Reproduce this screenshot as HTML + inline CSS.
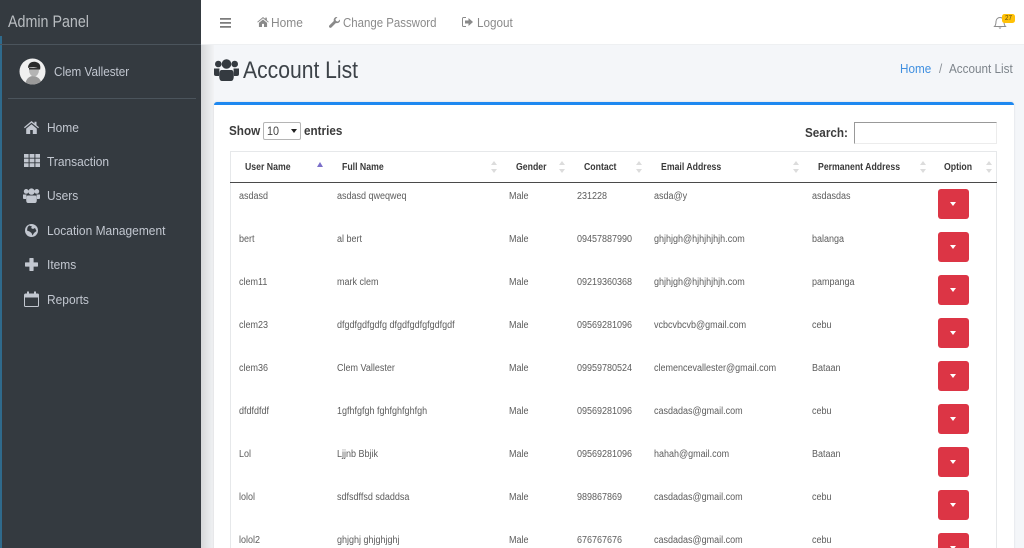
<!DOCTYPE html>
<html lang="en"><head><meta charset="utf-8"><title>Account List</title>
<style>
html,body{margin:0;padding:0;width:1024px;height:548px;overflow:hidden}
body{background:#f4f6f9;font-family:"Liberation Sans",sans-serif}
#w{position:absolute;left:0;top:0;width:1024px;height:548px;overflow:hidden;background:#f4f6f9;filter:blur(.3px)}
#w div,#w span,#w svg{position:absolute}
.t{white-space:nowrap;line-height:14px;height:14px;transform:scaleX(.9);transform-origin:0 50%}
.m{font-size:13.3px;color:#c2c7d0}
.n{font-size:13px;color:#8a8a8a}
.h{font-size:9.7px;font-weight:bold;color:#3a3a3a}
.c{font-size:10px;color:#5c5c5c}
.l{font-size:13px;font-weight:bold;color:#3c3c3c}
.b{width:31px;height:30px;left:938px;background:#dc3545;border-radius:3px}
.b:after{content:"";position:absolute;left:12px;top:13px;border:3.5px solid transparent;border-top:4px solid #fff;border-bottom:0}
.s{width:6px;height:12px;top:161px}
.s:before,.s:after{content:"";position:absolute;left:0;border:3px solid transparent}
.s:before{top:0;border-top:0;border-bottom:4px solid #dcdcdc}
.s:after{bottom:0;border-bottom:0;border-top:4px solid #dcdcdc}
</style></head><body><div id="w">
<!-- sidebar -->
<div style="left:201px;top:0;width:13px;height:548px;background:linear-gradient(90deg,#d6d8da,#f2f3f5)"></div>
<div style="left:0;top:0;width:201px;height:548px;background:#343a40"></div>
<div style="left:0;top:36px;width:2px;height:512px;background:#2f6a8c"></div>
<div style="left:0;top:44px;width:201px;height:1px;background:#4b545c"></div>
<div style="left:8px;top:98px;width:188px;height:1px;background:#4b545c"></div>
<span class="t" style="left:8px;top:13px;height:18px;line-height:18px;font-size:17px;color:#b9bdc1;transform:scaleX(.84)">Admin Panel</span>
<svg style="left:19px;top:58px" width="27" height="27" viewBox="0 0 27 27"><defs><clipPath id="a"><circle cx="13.5" cy="13.5" r="13"/></clipPath></defs><g clip-path="url(#a)"><rect width="27" height="27" fill="#f0f0f0"/><path d="M6 27c1-7 5-9 8-9s8 2 9 9z" fill="#9a9a9a"/><ellipse cx="15" cy="12" rx="5" ry="6.5" fill="#b4b4b4"/><path d="M9 10c0-5 4-7 8-6s5 4 4 8c-2-3-8-4-12-2z" fill="#2b2b2b"/><rect x="10" y="10" width="10" height="1.5" fill="#333"/></g></svg>
<span class="t" style="left:54px;top:65px;font-size:13px;color:#c2c7d0">Clem Vallester</span>

<svg style="left:24px;top:121px" width="15" height="13" viewBox="0 0 15 13"><path d="M7.5 0 0 6.300l.8.900L7.500 1.700l6.700 5.500.8-.9L12.500 4.200V.8h-2v1.700zM2.200 7.600V13h4V9h2.600v4h4V7.600L7.500 3.200z" fill="#c2c7d0"/></svg>
<span class="t m" style="left:47px;top:120.5px">Home</span>
<svg style="left:24px;top:154px" width="16" height="13" viewBox="0 0 16 13"><path d="M0 0h4.600v3.800H0zM5.600 0h4.800v3.800H5.600zM11.400 0H16v3.800h-4.600zM0 4.600h4.600v3.800H0zM5.600 4.600h4.800v3.800H5.600zM11.400 4.600H16v3.800h-4.600zM0 9.200h4.600V13H0zM5.600 9.200h4.800V13H5.600zM11.400 9.200H16V13h-4.600z" fill="#c2c7d0"/></svg>
<span class="t m" style="left:47px;top:154.5px">Transaction</span>
<svg style="left:23px;top:188px" width="17" height="15" viewBox="0 0 17 15"><g fill="#c2c7d0"><circle cx="3.200" cy="3.400" r="2.400"/><circle cx="13.800" cy="3.400" r="2.400"/><circle cx="8.500" cy="3.600" r="3.200"/><path d="M0 6.500h3.600L3 11H1c-1 0-1-1-1-1.500zM17 6.500h-3.600L14 11h2c1 0 1-1 1-1.500zM4.800 7.500h7.400c1.200 0 1.600 1.500 1.600 3.500s0 4-1.800 4H5c-1.800 0-1.800-2-1.800-4s.4-3.500 1.600-3.500z"/></g></svg>
<span class="t m" style="left:47px;top:189px">Users</span>
<svg style="left:25px;top:224px" width="13" height="13" viewBox="0 0 13 13"><circle cx="6.500" cy="6.500" r="6.500" fill="#c2c7d0"/><path d="M4 1.500 7 2.500 6 4 8 5 10 4 11.500 7 9 9 7.500 11.500 6.500 9 4.500 7.500 2 6.500 2.500 3.500z" fill="#343a40"/></svg>
<span class="t m" style="left:47px;top:224px">Location Management</span>
<svg style="left:25px;top:258px" width="13" height="13" viewBox="0 0 13 13"><path d="M5 0h3a.6.6 0 0 1 .6.6V4.400h3.800a.6.6 0 0 1 .6.6v3a.6.6 0 0 1-.6.6H8.600v3.800A.6.6 0 0 1 8 13H5a.6.6 0 0 1-.6-.6V8.600H.6A.6.6 0 0 1 0 8V5a.6.6 0 0 1 .6-.6h3.800V.6A.6.6 0 0 1 5 0z" fill="#c2c7d0"/></svg>
<span class="t m" style="left:47px;top:258px">Items</span>
<svg style="left:24px;top:291px" width="15" height="16" viewBox="0 0 15 16"><path d="M1.500 3h12a1 1 0 0 1 1 1v10.500a1 1 0 0 1-1 1h-12a1 1 0 0 1-1-1V4a1 1 0 0 1 1-1z" fill="none" stroke="#c2c7d0"/><path d="M.5 3.500h14v3H.5zM3 .5h2v3.500H3zM10 .5h2v3.500h-2z" fill="#c2c7d0"/></svg>
<span class="t m" style="left:47px;top:292.5px">Reports</span>

<!-- navbar -->
<div style="left:201px;top:0;width:823px;height:44px;background:#fff;border-bottom:1px solid #eef0f2"></div>
<svg style="left:220px;top:18px" width="11" height="10" viewBox="0 0 11 10"><path d="M0 0h11v1.800H0zM0 4h11v1.800H0zM0 8h11v1.800H0z" fill="#7c7c7c"/></svg>
<svg style="left:257px;top:17px" width="12" height="10" viewBox="0 0 15 13"><path d="M7.500 0 0 6.300l.8.900L7.500 1.700l6.700 5.500.8-.9L12.500 4.200V.8h-2v1.700zM2.200 7.600V13h4V9h2.600v4h4V7.600L7.500 3.200z" fill="#8a8a8a"/></svg>
<span class="t n" style="left:271px;top:15.5px;transform:scaleX(.92)">Home</span>
<svg style="left:329px;top:17px" width="11" height="11" viewBox="0 0 11 11"><path d="M11 2.500 8.800 4.600 7 4 6.400 2.200 8.500 0C6.500-.5 4.200 1.300 4.800 4L.4 8.400c-.6.600-.6 1.400 0 2s1.500.6 2.100 0L6.900 6c2.600.7 4.700-1.300 4.100-3.500z" fill="#8a8a8a"/></svg>
<span class="t n" style="left:343px;top:15.5px;transform:scaleX(.88)">Change Password</span>
<svg style="left:462px;top:17px" width="11" height="10" viewBox="0 0 11 10"><path d="M4 .5H1.500a1 1 0 0 0-1 1v7a1 1 0 0 0 1 1H4" fill="none" stroke="#8a8a8a"/><path d="M6.500 1 11 5 6.500 9V6.500H3v-3h3.500z" fill="#8a8a8a"/></svg>
<span class="t n" style="left:477px;top:15.5px">Logout</span>
<svg style="left:993px;top:15px" width="14" height="15" viewBox="0 0 14 15"><path d="M1.500 11.500c1.500-1.500 1.500-3 1.500-5C3 4 5 2.500 7 2.500S11 4 11 6.500c0 2 0 3.500 1.500 5z" fill="none" stroke="#8c8c8c"/><path d="M5.500 12.500h3L7 14z" fill="#8c8c8c"/></svg>
<div style="left:1002px;top:14px;width:13px;height:9px;background:#ffc107;border-radius:2.5px"></div>
<span class="t" style="left:1005px;top:12px;font-size:7px;color:#5a4a10">27</span>

<!-- header -->
<svg style="left:214px;top:58px" width="25" height="23" viewBox="0 0 25 23"><g fill="#343a40"><circle cx="4.300" cy="6" r="3.300"/><circle cx="20.700" cy="6" r="3.300"/><circle cx="12.500" cy="6" r="4.800"/><path d="M0 10.500h5.500L5 18H2c-2 0-2-1.500-2-2.500zM25 10.500h-5.500L20 18h3c2 0 2-1.500 2-2.500zM7.500 12h10c1.800 0 2.300 2.500 2.300 5.500s-.5 5.500-2.800 5.500H8c-2.300 0-2.800-2.500-2.800-5.500S5.700 12 7.500 12z"/></g></svg>
<span class="t" style="left:243px;top:57px;height:28px;line-height:28px;font-size:24px;color:#3c4248;transform:scaleX(.88)">Account List</span>
<span class="t" style="left:900px;top:62px;font-size:13px;color:#3f8fe0">Home</span>
<span class="t" style="left:938.5px;top:62px;font-size:13px;color:#8a9097">/</span>
<span class="t" style="left:949px;top:62px;font-size:13px;color:#7d848b">Account List</span>

<!-- card -->
<div style="left:214px;top:102px;width:800px;height:460px;background:#fff;border-top:3px solid #1e88f0;border-radius:3px;box-sizing:border-box;box-shadow:0 0 2px rgba(0,0,0,.12)"></div>
<span class="t l" style="left:229px;top:124px">Show</span>
<div style="left:263px;top:122px;width:38px;height:18px;box-sizing:border-box;border:1px solid #b5b5b5;border-radius:2px"></div>
<span class="t" style="left:267px;top:124px;font-size:12px;color:#444">10</span>
<div style="left:291px;top:129px;border:3px solid transparent;border-top:4px solid #222;border-bottom:0"></div>
<span class="t l" style="left:304px;top:124px">entries</span>
<span class="t l" style="left:805px;top:126px">Search:</span>
<div style="left:854px;top:122px;width:143px;height:22px;box-sizing:border-box;border:1px solid #ececec;border-top:1px solid #999;border-left:1px solid #999"></div>

<!-- table -->
<div style="left:230px;top:151px;width:767px;height:410px;box-sizing:border-box;border:1px solid #e6e8ea;border-bottom:0"></div>
<div style="left:230px;top:182px;width:767px;height:1px;background:#4a4a4a"></div>
<span class="t h" style="left:245px;top:161px">User Name</span>
<span class="t h" style="left:342px;top:161px">Full Name</span>
<span class="t h" style="left:516px;top:161px">Gender</span>
<span class="t h" style="left:583.5px;top:161px">Contact</span>
<span class="t h" style="left:660.5px;top:161px">Email Address</span>
<span class="t h" style="left:818px;top:161px">Permanent Address</span>
<span class="t h" style="left:944px;top:161px">Option</span>
<div style="left:317px;top:162px;border:3.5px solid transparent;border-top:0;border-bottom:5px solid #7b6fc9"></div>
<div class="s" style="left:491px"></div><div class="s" style="left:558.5px"></div><div class="s" style="left:636px"></div><div class="s" style="left:793px"></div><div class="s" style="left:920px"></div><div class="s" style="left:986px"></div>

<span class="t c" style="left:238.5px;top:190px">asdasd</span><span class="t c" style="left:336.5px;top:190px">asdasd qweqweq</span><span class="t c" style="left:509px;top:190px">Male</span><span class="t c" style="left:577px;top:190px">231228</span><span class="t c" style="left:654px;top:190px">asda@y</span><span class="t c" style="left:812px;top:190px">asdasdas</span><div class="b" style="top:189px"></div>
<span class="t c" style="left:238.5px;top:233px">bert</span><span class="t c" style="left:336.5px;top:233px">al bert</span><span class="t c" style="left:509px;top:233px">Male</span><span class="t c" style="left:577px;top:233px">09457887990</span><span class="t c" style="left:654px;top:233px">ghjhjgh@hjhjhjhjh.com</span><span class="t c" style="left:812px;top:233px">balanga</span><div class="b" style="top:232px"></div>
<span class="t c" style="left:238.5px;top:276px">clem11</span><span class="t c" style="left:336.5px;top:276px">mark clem</span><span class="t c" style="left:509px;top:276px">Male</span><span class="t c" style="left:577px;top:276px">09219360368</span><span class="t c" style="left:654px;top:276px">ghjhjgh@hjhjhjhjh.com</span><span class="t c" style="left:812px;top:276px">pampanga</span><div class="b" style="top:275px"></div>
<span class="t c" style="left:238.5px;top:319px">clem23</span><span class="t c" style="left:336.5px;top:319px">dfgdfgdfgdfg dfgdfgdfgfgdfgdf</span><span class="t c" style="left:509px;top:319px">Male</span><span class="t c" style="left:577px;top:319px">09569281096</span><span class="t c" style="left:654px;top:319px">vcbcvbcvb@gmail.com</span><span class="t c" style="left:812px;top:319px">cebu</span><div class="b" style="top:318px"></div>
<span class="t c" style="left:238.5px;top:362px">clem36</span><span class="t c" style="left:336.5px;top:362px">Clem Vallester</span><span class="t c" style="left:509px;top:362px">Male</span><span class="t c" style="left:577px;top:362px">09959780524</span><span class="t c" style="left:654px;top:362px">clemencevallester@gmail.com</span><span class="t c" style="left:812px;top:362px">Bataan</span><div class="b" style="top:361px"></div>
<span class="t c" style="left:238.5px;top:405px">dfdfdfdf</span><span class="t c" style="left:336.5px;top:405px">1gfhfgfgh fghfghfghfgh</span><span class="t c" style="left:509px;top:405px">Male</span><span class="t c" style="left:577px;top:405px">09569281096</span><span class="t c" style="left:654px;top:405px">casdadas@gmail.com</span><span class="t c" style="left:812px;top:405px">cebu</span><div class="b" style="top:404px"></div>
<span class="t c" style="left:238.5px;top:448px">Lol</span><span class="t c" style="left:336.5px;top:448px">Ljjnb Bbjik</span><span class="t c" style="left:509px;top:448px">Male</span><span class="t c" style="left:577px;top:448px">09569281096</span><span class="t c" style="left:654px;top:448px">hahah@gmail.com</span><span class="t c" style="left:812px;top:448px">Bataan</span><div class="b" style="top:447px"></div>
<span class="t c" style="left:238.5px;top:491px">lolol</span><span class="t c" style="left:336.5px;top:491px">sdfsdffsd sdaddsa</span><span class="t c" style="left:509px;top:491px">Male</span><span class="t c" style="left:577px;top:491px">989867869</span><span class="t c" style="left:654px;top:491px">casdadas@gmail.com</span><span class="t c" style="left:812px;top:491px">cebu</span><div class="b" style="top:490px"></div>
<span class="t c" style="left:238.5px;top:534px">lolol2</span><span class="t c" style="left:336.5px;top:534px">ghjghj ghjghjghj</span><span class="t c" style="left:509px;top:534px">Male</span><span class="t c" style="left:577px;top:534px">676767676</span><span class="t c" style="left:654px;top:534px">casdadas@gmail.com</span><span class="t c" style="left:812px;top:534px">cebu</span><div class="b" style="top:533px"></div>
</div></body></html>
